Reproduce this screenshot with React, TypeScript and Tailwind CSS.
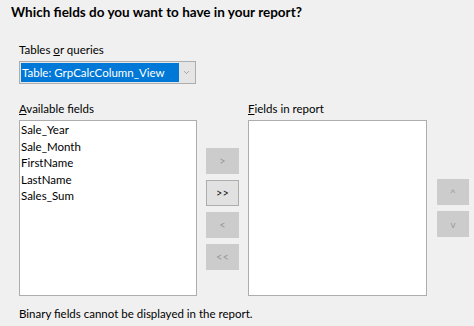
import { ChevronDown } from 'lucide-react';

const fields = ['Sale_Year', 'Sale_Month', 'FirstName', 'LastName', 'Sales_Sum'];

function MoveButton({ label, enabled = false }: { label: string; enabled?: boolean }) {
  return (
    <div
      className={
        enabled
          ? 'w-[33px] h-[26px] flex items-center justify-center border border-[#adadad] bg-[#e1e1e1] text-[#222] text-[11px]'
          : 'w-[33px] h-[26px] flex items-center justify-center border border-[#cccccc] bg-[#cccccc] text-[#9a9a9a] text-[11px]'
      }
    >
      {label}
    </div>
  );
}

export default function App() {
  return (
    <div
      className="w-[474px] h-[326px] bg-[#f0f0f0] text-black text-[11.5px] overflow-hidden"
      style={{ fontFamily: 'Lato, "Open Sans", sans-serif' }}
    >
      <div className="pl-[11px] pt-[3px] font-bold text-[13.5px] leading-[18px]">
        Which fields do you want to have in your report?
      </div>

      <div className="pl-[19px] mt-[21px] leading-[16px]">
        Tables <span className="underline">o</span>r queries
      </div>

      <div className="ml-[19px] mt-[3px] w-[177px] h-[23px] border border-[#adadad] bg-[#e5e5e5] flex p-[1px]">
        <div className="flex-1 bg-[#0078d7] text-white leading-[19px] pl-[1px]">
          Table: GrpCalcColumn_View
        </div>
        <div className="w-[15px] flex items-center justify-center text-[#707070]">
          <ChevronDown size={9} strokeWidth={1.5} />
        </div>
      </div>

      <div className="flex pl-[19px] mt-[17px]">
        <div className="w-[178px] flex flex-col">
          <div className="leading-[16px] h-[16px]">
            <span className="underline">A</span>vailable fields
          </div>
          <div className="mt-[3px] h-[176px] border border-[#adadad] bg-white pt-[1px] pl-[1px]">
            {fields.map((f) => (
              <div key={f} className="leading-[16.5px]">
                {f}
              </div>
            ))}
          </div>
        </div>

        <div className="ml-[9px] pt-[47px] flex flex-col gap-[6px]">
          <MoveButton label=">" />
          <MoveButton label=">>" enabled />
          <MoveButton label="<" />
          <MoveButton label="<<" />
        </div>

        <div className="ml-[9px] w-[179px] flex flex-col">
          <div className="leading-[16px] h-[16px]">
            <span className="underline">F</span>ields in report
          </div>
          <div className="mt-[3px] h-[176px] border border-[#adadad] bg-white" />
        </div>

        <div className="ml-[10px] pt-[78px] flex flex-col gap-[6px]">
          <div className="w-[32px] h-[26px] flex items-center justify-center bg-[#cccccc] text-[#9a9a9a] text-[10px]">
            ^
          </div>
          <div className="w-[32px] h-[26px] flex items-center justify-center bg-[#cccccc] text-[#9a9a9a] text-[10px]">
            v
          </div>
        </div>
      </div>

      <div className="pl-[19px] mt-[10px] leading-[16px]">
        Binary fields cannot be displayed in the report.
      </div>
    </div>
  );
}
